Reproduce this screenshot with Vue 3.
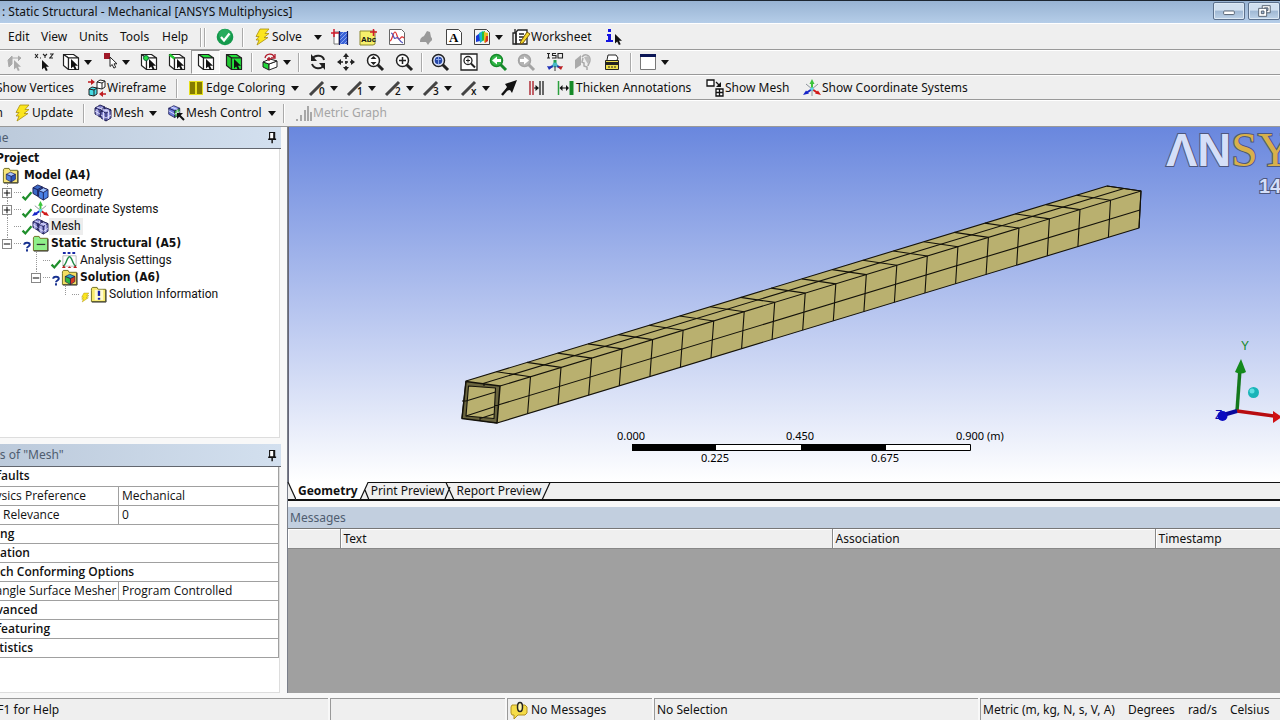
<script setup>
const cursor = (x, y, f = '#111', s = 'none') =>
  `<path transform="translate(${x} ${y})" d="M0 0v9.5l2.2-2 1.7 3.6 1.8-.9-1.7-3.4h3z" fill="${f}" stroke="${s}"/>`
const box = (top = '#fff', front = '#fff', side = '#fff') =>
  `<g stroke="#222" stroke-width="1.2" stroke-linejoin="round"><path d="M1.500 1.500h10l5 3.500h-10z" fill="${top}"/><path d="M1.500 1.500l5 3.500v11.500l-5-4z" fill="${side}"/><path d="M6.500 5h10v11.500h-10z" fill="${front}"/></g>`
const lens = (c = '#222', inner = '', fill = '#fff') =>
  `<path d="M11 11l6 6" stroke="${c}" stroke-width="3"/><circle cx="7.500" cy="7.500" r="6" fill="${fill}" stroke="${c}" stroke-width="1.500"/>${inner}`
const bolt = '<path d="M7 1h9l-4 4.500h4l-5 4h4L4 17l2-5H3l3-3.500H3z" fill="#fbe51c" stroke="#a98f10" stroke-width=".8"/>'
const axes = '<path d="M9 11V3" stroke="#3cc43c" stroke-width="2"/><path d="M6.500 5L9 0l2.500 5z" fill="#3cc43c"/><path d="M9 10l-5 3.500" stroke="#1624c8" stroke-width="2"/><path d="M0 16l3-4.500 3 3z" fill="#1624c8"/><path d="M9 10l5 3.500" stroke="#d01818" stroke-width="2"/><path d="M18 16l-3-4.500-3 3z" fill="#d01818"/><path d="M3 5l6 5M9 11v6M15 5l-6 5" stroke="#8a929a"/><circle cx="9" cy="10" r="1.800" fill="#5fd5e6"/>'
const solid = (a, b, c) =>
  `<g stroke="#181850" stroke-width=".9" stroke-linejoin="round"><path d="M2 5l6-3 7 3-6 3z" fill="${a}"/><path d="M2 5l7 3v8l-7-4z" fill="${b}"/><path d="M15 5l-6 3v8l6-4z" fill="${c}"/></g>`
const twin = (a, b, c, extra = '') =>
  `<g stroke="#15154a" stroke-width=".9" stroke-linejoin="round"><path d="M1 4l5-3 5 2v7l-5 3-5-3z" fill="${b}"/><path d="M1 4l5 2 5-3M6 6v7" fill="none"/><path d="M7 7l5-3 5 2v8l-5 3-5-3z" fill="${c}"/><path d="M7 7l5 2 5-3-5-2z" fill="${a}"/><path d="M12 9v8" fill="none"/></g>${extra}`
const folder = (f, inner = '') =>
  `<path d="M1.500 4.500V3l1-1.500h5l1 2h8v13h-15z" fill="${f}" stroke="#6d6d20"/><path d="M17 4v13H2" fill="none" stroke="#333"/>${inner}`
const edge = (n) =>
  `<path d="M2 16L15 3" stroke="#444" stroke-width="3"/><text x="11" y="16" font-family="Open Sans, sans-serif" font-size="10" font-weight="600" fill="#111">${n}</text>`
const meshLines = '<path d="M1 7l5 3M3 3l5 2M3 5v7M8 3v3M7 11l5 3 5-3M9.500 8v8M14.500 7v8M9 5.500l6 2" stroke="#e4e4ff" stroke-width=".9" fill="none"/>'

const icons = {
  ok: '<circle cx="9" cy="9" r="8.300" fill="#14994c"/><circle cx="9" cy="7" r="6" fill="#35b86b" opacity=".6"/><path d="M5 9l3 3.500 5.500-7" fill="none" stroke="#fff" stroke-width="2.200"/>',
  bolt,
  section: '<path d="M3 4h5v12H3z" fill="#fff" stroke="#777"/><path d="M8 4h9v12H8z" fill="#3a62d8"/><path d="M9 8l4-4M9 12l8-8M9 16l8-8M13 16l4-4" stroke="#9db8f4" stroke-width=".8"/><path d="M8.500 3v14M16.500 3v14" stroke="#111b60" stroke-width="1.200"/><path d="M0 5h8M3 1v8" stroke="#d01c2c" stroke-width="1.500"/>',
  note: '<path d="M1 3h15v13l-2 1H1z" fill="#f7f06a" stroke="#8c8830"/><text x="2" y="14" font-family="Liberation Sans, sans-serif" font-size="8" font-weight="700" fill="#111">Abc</text><path d="M11 4h7M14.500 1v7" stroke="#d01c2c" stroke-width="1.500"/>',
  chart: '<path d="M1.500 1.500h12l3 3v12h-15z" fill="#fff" stroke="#666"/><path d="M2 13c2 0 3-9 5-9s2 7 4 7 2-4 5-1" fill="none" stroke="#d33" stroke-width="1.200"/><path d="M3 5c3 0 2 7 5 5s3 4 7 5" fill="none" stroke="#55b" stroke-width="1.200"/>',
  comment: '<path d="M3 14c0-4 2-5 4-6l3-5 3 1 1 5c2 2 1 4-1 5l-2 3-2-3z" fill="#9a9a9a"/>',
  image: '<path d="M1.500 1.500h12l3 3v12h-15z" fill="#fff" stroke="#444"/><text x="4" y="14" font-family="Liberation Serif, serif" font-weight="700" font-size="13">A</text>',
  picture: '<path d="M1.500 1.500h12l3 3v12h-15z" fill="#f4f4f4" stroke="#444"/><path d="M3 8l4-3v8l-4 1z" fill="#1838d8"/><path d="M6 5l4-2 1 9-4 3z" fill="#18b8d0"/><path d="M9 4l3-1v9l-3 1z" fill="#29c038"/><path d="M11 4l4 1v7l-4 3z" fill="#e8c020"/><path d="M13 8h2v5l-3 2z" fill="#d83020"/>',
  sheet: '<path d="M4 4l2-2h9v14H4z" fill="#fff" stroke="#222" stroke-width="1.300"/><path d="M1 5h3v11H1zM3 1v4M7 6h5M7 9h5M7 12h3" fill="none" stroke="#222" stroke-width="1.300"/><path d="M15 4l3 2-7 9-3 1 1-3z" fill="#f6d928" stroke="#7a5a10"/>',
  info: '<path d="M3 1h3v3H3zM2 6h4v6h2v2H1v-2h2V8H2z" fill="#1414e0"/>' + cursor(10, 6),
  probe: '<path d="M2 7l4-4v8l-3 3zM6 5h8M12 3l3 2-3 3" fill="#aaa" stroke="#aaa"/>' + cursor(8, 7, '#aaa'),
  xyz: '<path d="M0 1l3 4M3 1L0 5M5 5h1M8 1l2 2 2-2M10 3v2M14 5h1M15 1h3l-3 4h3" stroke="#222" stroke-width="1.100" fill="none"/>' + cursor(7, 7),
  boxSel: box() + cursor(9, 6),
  pick: '<path d="M0 0h6v6H0z" fill="#a01828"/>' + cursor(6, 4, '#fff', '#222'),
  vertexSel: box() + '<circle cx="6" cy="5" r="2.500" fill="#28e040" stroke="#164"/>' + cursor(9, 6),
  edgeSel: box() + '<path d="M1.500 1.500l5 4" stroke="#20c830" stroke-width="2.500"/>' + cursor(9, 6),
  faceSel: box('#22e33a') + cursor(9, 6),
  bodySel: box('#22e33a', '#22e33a', '#22c832') + cursor(9, 6),
  view: '<path d="M2 9l6 2v6l-6-3z" fill="#22d838" stroke="#222"/><path d="M8 11l8-3v6l-8 3z" fill="#fff" stroke="#222"/><path d="M2 9l7-3 7 2-8 3z" fill="#fff" stroke="#222"/><path d="M4 5c1-5 8-5 9-1M14 1v4h-4M8 4v4M6 6h4" fill="none" stroke="#b01828" stroke-width="1.300"/>',
  rotate: '<path d="M3 6c3-5 11-4 12 1M15 12c-3 5-10 4-12-1" fill="none" stroke="#222" stroke-width="2"/><path d="M2 1v7h6zM16 17v-7h-6z" fill="#222"/>',
  pan: '<path d="M9 3v12M3 9h12" stroke="#222" stroke-width="1.500" stroke-dasharray="3 2"/><path d="M9 0l3 4H6zM9 18l3-4H6zM0 9l4-3v6zM18 9l-4-3v6z" fill="#222"/>',
  zoomDrag: lens('#222', '<path d="M7.500 3l3 3h-6zM7.500 12l3-3h-6z" fill="#222"/>'),
  zoomIn: lens('#222', '<path d="M7.500 4v7M4 7.500h7" stroke="#222" stroke-width="1.500"/>'),
  zoomFit: lens('#222', '<circle cx="7.500" cy="7.500" r="3.800" fill="#2748a8"/><path d="M5 6.500h5M7.500 4v7" stroke="#89a5e8"/>', '#dfe8ff'),
  zoomBox: '<path d="M1 1h16v16H1z" fill="#fff" stroke="#222" stroke-width="1.300"/><circle cx="8" cy="7.500" r="4" fill="#fff" stroke="#222" stroke-width="1.300"/><path d="M11 10.500l4 4" stroke="#222" stroke-width="2"/><path d="M6 7.500h4M8 5.500v4" stroke="#222"/>',
  zoomPrev: lens('#16892a', '<path d="M3 7.500l5-4v2.500h4v3H8v2.500z" fill="#fff"/>', '#2fb545'),
  zoomNext: lens('#a4a4a4', '<path d="M12 7.500l-5-4v2.500H3v3h4v2.500z" fill="#fff"/>', '#b4b4b4'),
  iso: '<path d="M1 .500h3M1 5h3M2.500 0v5M10 .500H6.500v2H10V5H6M12 .500h4.500V5H12z" fill="none" stroke="#222" stroke-width="1.100"/><path d="M9 12V7" stroke="#22a050" stroke-width="3"/><path d="M9 12l-6 3M9 12l6 3" stroke="#2438a8" stroke-width="2"/><path d="M1 13l2 4 3-3z" fill="#2030b8"/><path d="M17 13l-2 4-3-3z" fill="#c02020"/><circle cx="9" cy="12" r="2.500" fill="#48b8c8"/><path d="M9 13v5" stroke="#333"/>',
  look: '<path d="M1 7l6-5v10l-6 4z" fill="#aaa"/><path d="M8 4c3-4 8-2 8 3 0 3-2 4-2 6M9 5l-1 4 2 1v3l3 1v3" fill="none" stroke="#aaa" stroke-width="1.500"/><path d="M10 4l5-1 1 4-2 4-2-3z" fill="#bbb"/>',
  print: '<path d="M4 7l1-5h8l2 3-1 2" fill="#fff" stroke="#222"/><path d="M2.500 7.500h13v9h-13z" fill="#eee04c" stroke="#222"/><path d="M2 9h14v3H2z" fill="#222"/><path d="M6 13v2M9 13v2M12 13v2" stroke="#222"/>',
  pane: '<path d="M1.500 1.500h15v15h-15z" fill="#fff" stroke="#777"/><path d="M1 1h16v3H1z" fill="#0b1656"/>',
  wire: '<path d="M9 3l3-2 5 1v6l-3 2-5-1z" fill="#fff" stroke="#222"/><path d="M9 3l5 1v6M14 4l3-2" fill="none" stroke="#222"/><path d="M1 10l3-2 5 1v6l-3 2-5-1z" fill="#46dbe4" stroke="#222"/><path d="M1 10l5 1v6M6 11l3-2" fill="none" stroke="#222"/><path d="M0 3h4M14 15h4" stroke="#c01c20" stroke-width="1.500"/><path d="M3 0l4 3-4 3zM15 12l-4 3 4 3z" fill="#c01c20"/>',
  color: '<path d="M2 2h14v14H2z" fill="#e6e01c"/><path d="M3 3h5v12H3zM10 3h5v12h-5z" fill="#857c00"/>',
  e0: edge(0), e1: edge(1), e2: edge(2), e3: edge(3), ex: edge('x'),
  dart: '<path d="M2 16l6-7" stroke="#111" stroke-width="2.500"/><path d="M17 1l-5 13-2-3-5 1 2-4-2-3z" fill="#111"/>',
  thickness: '<path d="M3 2v14M6 2v14" stroke="#b0303a" stroke-width="1.500"/><path d="M13 2v14M16 2v14" stroke="#666" stroke-width="2"/><path d="M7 9h3" stroke="#111"/><path d="M8.500 6l3.500 3-3.500 3z" fill="#111"/>',
  thicken: '<path d="M1.500 2v14" stroke="#2ba03c" stroke-width="1.500"/><path d="M14.500 2v14" stroke="#168a28" stroke-width="4"/><path d="M4 9h7" stroke="#111"/><path d="M2.500 9l3-3v6zM12 9L9 6v6z" fill="#111"/>',
  mesh: '<path d="M1 1h7v6H1zM10 10h7v7h-7zM13.500 10v7M10 13.500h7" fill="#fff" stroke="#111" stroke-width="1.300"/><path d="M10 3l4 4" stroke="#111" stroke-width="1.300"/><path d="M15 3v5h-5z" fill="#111"/>',
  axes,
  meshCube: twin('#a9a9e8', '#7c7cc8', '#8585d0', meshLines),
  control: '<g transform="scale(.85)">' + solid('#8d9cf0', '#6a78d8', '#37b83f') + '<path d="M2 8l7 4 6-3M5 3.500l7 3v7" stroke="#e8e8ff" fill="none"/></g><path d="M11 10l6 6" stroke="#111" stroke-width="2"/><path d="M10 9h6l-6 6z" fill="#111"/>',
  graph: '<path d="M3 17v-2M7 17v-6M11 17V6M14 17V2M17 17V8" stroke="#a8a8a8" stroke-width="2"/>',
  model: folder('#f7e57a', '<g transform="translate(3 4) scale(.75)">' + solid('#a9c5ff', '#4f7fe0', '#2c55b8') + '</g>'),
  geom: twin('#9cc0ff', '#3c6ac8', '#4a80e4'),
  env: folder('#8ff08a', '<path d="M5 10h9" stroke="#333" stroke-width="1.300"/>'),
  settings: '<path d="M2 1h3M7 1h3M12 1h3" stroke="#1828a8" stroke-width="2"/><path d="M2 4h14v11H2z" fill="#fff" stroke="#bbb"/><path d="M2 15C6 14 6 5 9 5s3 9 7 10" fill="none" stroke="#1f8a45" stroke-width="1.500"/><path d="M1 17l2-3 2 3zM13 17l2-3 2 3zM7 17l2-2 2 2z" fill="#b82020"/>',
  solution: folder('#f2df62', '<g transform="translate(3 4) scale(.78)">' + solid('#2aa8c8', '#2cb840', '#d83a20') + '</g>'),
  infoFolder: folder('#f8ea6c', '<path d="M5 4h9v11H5z" fill="#fffbd0"/><path d="M9.500 5v5.500" stroke="#1420a8" stroke-width="2.500"/><path d="M8.300 12.500h2.500v2H8.300z" fill="#1420a8"/>'),
  bubble: '<path d="M2 4h13l2 2v6l-2 2H8l-4 4v-4H2l-1-2V6z" fill="#f5dc48" stroke="#b09020"/><ellipse cx="10" cy="6" rx="2.500" ry="4.500" fill="#fff6b0" stroke="#222" stroke-width="1.500"/>',
  pin: '<path d="M5 2h7v9H5z" fill="#fff" stroke="#111" stroke-width="1.500"/><path d="M11 2v9M3 11.500h11M8.500 12v5" stroke="#111" stroke-width="2"/>',
  check: '<path d="M1 11l5 5L17 3" fill="none" stroke="#1f8f2c" stroke-width="4"/>',
  query: '<path d="M4 6c0-5 10-5 10 0 0 3-5 3-5 6M9 14v4" fill="none" stroke="#16308f" stroke-width="3.500"/>'
}

const i = (icon, label) => ({ icon, label })
const l = (text, icon, extra) => ({ text, icon, extra })
const d = (label) => ({ drop: label })
const s = { sep: true }
const g = { gap: true }
const bars = [
  { name: 'menu', items: [l('Edit'), l('View'), l('Units'), l('Tools'), l('Help'), s, s, i('ok', 'Status'), s, g, l('Solve', 'bolt'), d('Solve options'), i('section', 'New section plane'), i('note', 'Annotation'), i('chart', 'Chart'), i('comment', 'Comment'), i('image', 'Figure'), i('picture', 'Image'), d('Image options'), l('Worksheet', 'sheet'), i('info', 'Selection information')] },
  { name: 'select', items: [i('probe', 'Direction'), i('xyz', 'Coordinates'), i('boxSel', 'Select type'), d('Select types'), i('pick', 'Select mode'), d('Select modes'), i('vertexSel', 'Vertex'), i('edgeSel', 'Edge'), { icon: 'faceSel', label: 'Face', on: true }, i('bodySel', 'Body'), s, i('view', 'View'), d('Views'), s, i('rotate', 'Rotate'), i('pan', 'Pan'), i('zoomDrag', 'Zoom'), i('zoomIn', 'Box zoom'), s, i('zoomFit', 'Zoom to fit'), i('zoomBox', 'Magnifier'), i('zoomPrev', 'Previous view'), i('zoomNext', 'Next view'), i('iso', 'Isometric'), i('look', 'Look at'), i('print', 'Manage views'), s, i('pane', 'Viewports'), d('Viewport layout')] },
  { name: 'display', items: [l('Show Vertices', null, 'cut'), g, l('Wireframe', 'wire'), s, g, l('Edge Coloring', 'color'), d('Edge coloring options'), i('e0', 'Edge 0'), d('Edge 0 options'), i('e1', 'Edge 1'), d('Edge 1 options'), i('e2', 'Edge 2'), d('Edge 2 options'), i('e3', 'Edge 3'), d('Edge 3 options'), i('ex', 'Edge x'), d('Edge x options'), i('dart', 'Edge direction'), i('thickness', 'Thickness'), g, l('Thicken Annotations', 'thicken'), l('Show Mesh', 'mesh'), l('Show Coordinate Systems', 'axes')] },
  { name: 'context', items: [l('Mesh', null, 'cut'), g, l('Update', 'bolt'), s, g, l('Mesh', 'meshCube'), d('Mesh options'), l('Mesh Control', 'control'), d('Mesh controls'), s, g, l('Metric Graph', 'graph', 'off')] }
]

const tree = [
  { lv: 1, box: '+', st: 'check', icon: 'geom', text: 'Geometry' },
  { lv: 1, box: '+', st: 'check', icon: 'axes', text: 'Coordinate Systems' },
  { lv: 1, st: 'check', icon: 'meshCube', text: 'Mesh', sel: true },
  { lv: 1, box: '−', st: 'query', icon: 'env', text: 'Static Structural (A5)', bold: true, last: true },
  { lv: 2, st: 'check', icon: 'settings', text: 'Analysis Settings' },
  { lv: 2, box: '−', st: 'query', icon: 'solution', text: 'Solution (A6)', bold: true, last: true },
  { lv: 3, st: 'bolt', icon: 'infoFolder', text: 'Solution Information', last: true }
]

const details = [
  { group: 'Defaults' },
  { key: 'Physics Preference', value: 'Mechanical' },
  { key: 'Relevance', value: '0', param: true },
  { group: 'Sizing' },
  { group: 'Inflation' },
  { group: 'Patch Conforming Options' },
  { key: 'Triangle Surface Mesher', value: 'Program Controlled' },
  { group: 'Advanced' },
  { group: 'Defeaturing' },
  { group: 'Statistics' }
]

// Beam mesh: 21 divisions along its length
const N = 21
const at = (a, b, k) => [a[0] + ((b[0] - a[0]) * k) / N, a[1] + ((b[1] - a[1]) * k) / N]
const near = { back: [466, 381], top: [500, 386], bottom: [497, 423] }
const far = { back: [1107, 186], top: [1141, 191], bottom: [1139, 228] }
const cuts = Array.from({ length: N }, (_, k) =>
  ['back', 'top', 'bottom'].map((p) => at(near[p], far[p], k + 1).map((v) => v.toFixed(1)).join(',')).join(' ')
)
</script>

<template>
  <div class="app">
    <header class="title">
      <h1>: Static Structural - Mechanical [ANSYS Multiphysics]</h1>
      <div class="winbtns">
        <button aria-label="Minimize"><svg viewBox="0 0 18 18"><rect x="3" y="9" width="12" height="4" rx="1" fill="#fff" stroke="#4c5868" /></svg></button>
        <button aria-label="Restore"><svg viewBox="0 0 18 18"><path d="M7 3h9v8H7z" fill="#fff" stroke="#4c5868" /><path d="M9.500 5.500h4v3h-4z" fill="#9fb6d3" stroke="#4c5868" /><path d="M3 6h9v9H3z" fill="#fff" stroke="#4c5868" /><path d="M6 9h3v3H6z" fill="#9fb6d3" stroke="#4c5868" /></svg></button>
      </div>
    </header>

    <nav v-for="b in bars" :key="b.name" class="bar" :class="b.name" :aria-label="b.name">
      <template v-for="(it, n) in b.items" :key="n">
        <span v-if="it.sep" class="sep"></span>
        <span v-else-if="it.gap"></span>
        <button v-else-if="it.drop" class="drop" :aria-label="it.drop"><svg viewBox="0 0 9 5"><path d="M0 0h8L4 5z" fill="#111" /></svg></button>
        <button v-else-if="it.text" class="lab" :class="it.extra"><svg v-if="it.icon" viewBox="0 0 18 18" v-html="icons[it.icon]"></svg>{{ it.text }}</button>
        <button v-else class="ico" :class="{ on: it.on }" :aria-label="it.label"><svg viewBox="0 0 18 18" v-html="icons[it.icon]"></svg></button>
      </template>
    </nav>

    <main>
      <aside>
        <section class="outline">
          <h2><span>Outline</span><button aria-label="Pin outline"><svg viewBox="0 0 18 18" v-html="icons.pin"></svg></button></h2>
          <ul class="tree">
            <li class="root"><b>Project</b></li>
            <li class="model"><svg viewBox="0 0 18 18" v-html="icons.model"></svg><b>Model (A4)</b></li>
            <li v-for="t in tree" :key="t.text" :class="['lv' + t.lv, { last: t.last }]">
              <span class="node"><button v-if="t.box" :aria-label="'Toggle ' + t.text"><svg viewBox="0 0 10 10"><path :d="t.box === '+' ? 'M1 5h8M5 1v8' : 'M1 5h8'" stroke="#111" stroke-width="1.300" /></svg></button></span>
              <span class="dots"></span>
              <svg class="st" viewBox="0 0 18 18" v-html="icons[t.st]"></svg>
              <svg viewBox="0 0 18 18" v-html="icons[t.icon]"></svg>
              <span class="name" :class="{ bold: t.bold, sel: t.sel }">{{ t.text }}</span>
            </li>
          </ul>
        </section>
        <section class="details">
          <h2><span>Details of "Mesh"</span><button aria-label="Pin details"><svg viewBox="0 0 18 18" v-html="icons.pin"></svg></button></h2>
          <div class="sheet">
            <table>
              <colgroup><col class="keys"><col></colgroup>
              <tbody>
                <tr v-for="r in details" :key="r.group || r.key">
                  <th v-if="r.group" colspan="2">{{ r.group }}</th>
                  <template v-else>
                    <td :class="{ param: r.param }">{{ r.key }}</td>
                    <td>{{ r.value }}</td>
                  </template>
                </tr>
              </tbody>
            </table>
          </div>
        </section>
      </aside>

      <div class="work">
        <div class="view">
          <svg class="scene" viewBox="289 127 991 355" preserveAspectRatio="xMaxYMid slice">
            <g fill="#b9b06f" stroke="#14120a" stroke-width="1.100" stroke-linejoin="round">
              <path d="M466 381L1107 186L1141 191L1139 228L497 423L462 418z" />
              <path d="M500 386L1141 191M483 383.500L1124 188.500M498 405L1140 210" fill="none" />
              <polyline v-for="c in cuts" :key="c" :points="c" fill="none" />
              <path d="M466 381.500L500 386L497 423L462 418.500z" fill="#6a653f" stroke-width="1.500" />
              <path d="M468.500 386L495.500 388L494 418.500L466 416z" />
              <path d="M466 401L495.500 392M466 416L495 406.500M480 418.500L494 414M462 401h4M484 383v3M495 405.500h4M480 417v4" fill="none" />
            </g>
            <path d="M632.500 444.500h338v6h-338z" fill="#fff" stroke="#000" />
            <path d="M632 444h84v7h-84zM801 444h85v7h-85z" />
            <g class="scale">
              <text x="617" y="440">0.000</text><text x="786" y="440">0.450</text><text x="956" y="440">0.900 (m)</text>
              <text x="701" y="462">0.225</text><text x="871" y="462">0.675</text>
            </g>
            <path d="M1237 411l3-42" stroke="#14781c" stroke-width="3.500" />
            <path d="M1241 359l5 13q-5 3-11 0z" fill="#148a1c" />
            <path d="M1237 411l37 5" stroke="#b80c10" stroke-width="3.500" />
            <path d="M1273 411l9 6-9 6z" fill="#d01014" />
            <path d="M1237 411l-14 4" stroke="#08089c" stroke-width="4" />
            <text x="1215" y="419" class="ax z">Z</text>
            <circle cx="1222.500" cy="416" r="5" fill="#0a0ac0" />
            <circle cx="1253.500" cy="392.500" r="5.500" fill="#19b4b8" /><circle cx="1252" cy="391" r="2.500" fill="#5fe0e2" />
            <text x="1241" y="350" class="ax y">Y</text>
            <text x="1166" y="166" class="logo an">ΛN</text>
            <text x="1231" y="166" class="logo sys">SYS</text>
            <text x="1259" y="193" class="logo ver">14.0</text>
          </svg>
        </div>
        <div class="tabs">
          <svg viewBox="0 0 8 18" class="s8"><path d="M0 0h8v18z" fill="#fff" stroke="none" /><path d="M0 0l8 17.500" /></svg>
          <button class="cur">Geometry</button>
          <svg viewBox="0 0 12 18" class="s12"><path d="M0 0h10L1 17H0z" fill="#fff" stroke="none" /><path d="M1 18L9 .500h3M6 8l4 10" /></svg>
          <button>Print Preview</button>
          <svg viewBox="0 0 12 18" class="s12"><path d="M0 .500h12M1 17L6 5M2 .500L10 18" /></svg>
          <button>Report Preview</button>
          <svg viewBox="0 0 12 18" class="s12"><path d="M0 .500h12M1 18L9 .500" /></svg>
          <span class="rest"></span>
        </div>
        <section class="messages">
          <h2><span>Messages</span></h2>
          <table>
            <thead>
              <tr><th class="a"></th><th class="b">Text</th><th class="c">Association</th><th>Timestamp</th></tr>
            </thead>
          </table>
        </section>
      </div>
    </main>

    <footer>
      <span class="help"><span>Press F1 for Help</span></span>
      <span class="p2"></span>
      <span class="p3"><svg viewBox="0 0 18 18" v-html="icons.bubble"></svg>No Messages</span>
      <span class="p4">No Selection</span>
      <span class="p5"><span>Metric (m, kg, N, s, V, A)</span><span>Degrees</span><span>rad/s</span><span>Celsius</span></span>
    </footer>
  </div>
</template>

<style>
body { margin: 0; overflow: hidden; }
</style>

<style scoped>
* { box-sizing: border-box; }
.app { display: flex; flex-direction: column; height: 100vh; overflow: hidden; background: #f8f8f8; color: #111; font: 12px/16px "Noto Sans", "Open Sans", sans-serif; }
button { border: 0; padding: 0; margin: 0; background: none; font: inherit; color: inherit; }
svg { display: block; flex: none; width: 18px; height: 18px; overflow: visible; }
h1, h2 { margin: 0; font: inherit; }
.title { display: flex; flex: none; justify-content: space-between; height: 23px; border-top: 1px solid #1c2530; background: linear-gradient(#98b3d3, #b5cde8); overflow: hidden; }
.title h1 { padding-left: 2px; line-height: 22px; white-space: nowrap; }
.winbtns { display: flex; gap: 3px; padding-top: 1px; }
.winbtns button { display: flex; align-items: center; justify-content: center; width: 32px; height: 18px; border: 1px solid #5b708c; border-radius: 2px; background: linear-gradient(#d0dfef 45%, #9fb8d4 50%, #bdd2e8); box-shadow: inset 0 0 0 1px #dce9f5; }
.winbtns svg { width: 16px; height: 16px; }
.bar { display: grid; flex: none; height: 25px; background: #efefef; border-bottom: 1px solid #999; box-shadow: inset 0 1px #fff; align-items: stretch; white-space: nowrap; }
.menu { height: 27px; padding-top: 2px; padding-left: 8px; grid-template-columns: 33px 38px 41px 42px 37px 3px 6px 33px 3px 9px 61px 12px 28px 28px 29px 29px 28px 27px 17px 89px 26px; }
.select { grid-template-columns: 29px 29px 26px 19px 19px 12px 29px 28px 29px 28px 8px 27px 11px 9px 29px 28px 29px 29px 8px 28px 29px 29px 28px 29px 28px 29px 9px 26px 12px; }
.display { padding-top: 2px; grid-template-columns: 74px 14px 86px 6px 7px 104px 12px 27px 11px 27px 11px 27px 11px 27px 11px 27px 13px 27px 27px 8px 149px 97px 180px; }
.context { height: 27px; grid-template-columns: 3px 10px 68px 6px 7px 55px 18px 101px 13px 6px 7px 110px; }
.bar button { display: flex; align-items: center; }
.lab { gap: 1px; }
.lab.cut { justify-content: flex-end; }
.lab.off { color: #a5a5a5; }
.ico { justify-content: center; }
.ico.on { background: #f8f8f8; border: 1px solid #999; border-right-color: #fff; border-bottom-color: #fff; }
.drop svg { width: 9px; height: 5px; }
.sep { justify-self: center; align-self: center; width: 2px; height: 19px; border-left: 1px solid #aaa; background: #fff; }
main { display: grid; flex: 1; min-height: 0; grid-template-columns: 281px minmax(0, 1fr); column-gap: 6px; padding-bottom: 5px; }
aside { display: grid; grid-template-rows: 311px minmax(0, 1fr); row-gap: 6px; min-height: 0; overflow: hidden; }
section { display: flex; flex-direction: column; min-height: 0; }
h2 { display: flex; flex: none; align-items: center; height: 22px; background: linear-gradient(90deg, #bccadb, #d3e0ef); color: #4f5d70; white-space: nowrap; }
aside h2 { justify-content: space-between; border-bottom: 1px solid #62666e; padding-right: 2px; }
h2 svg { width: 13px; height: 13px; }
aside h2 span { margin-left: -33px; }
.tree { flex: 1; margin: 0 1px 0 0; padding: 1px 0 0; list-style: none; background: #fff; border: 1px solid #ddd; border-width: 0 1px 1px 0; font: 12px/17px Roboto, "Noto Sans", sans-serif; }
.tree li { display: flex; align-items: center; height: 17px; white-space: nowrap; }
.tree svg { width: 17px; height: 17px; }
.root { margin-left: -4px; }
.model { gap: 5px; padding-left: 2px; }
.lv2 { padding-left: 29px; }
.lv3 { padding-left: 58px; }
.node { display: flex; align-items: center; align-self: stretch; width: 14px; padding-left: 2px; background: repeating-linear-gradient(#999 0 1px, transparent 1px 2px) 7px 0 / 1px 100% no-repeat; }
.last .node { background-size: 1px 9px; }
.node button { width: 10px; height: 10px; background: #fff; border: 1px solid #888; }
.node button svg { width: 8px; height: 8px; }
.dots { width: 8px; height: 1px; background: repeating-linear-gradient(90deg, #999 0 1px, transparent 1px 2px); }
.tree .st { align-self: flex-end; width: 10px; height: 11px; }
.name { padding: 0 2px; }
.bold, .tree b { font-family: "DejaVu Sans Condensed", "Noto Sans", sans-serif; font-weight: 700; }
.sel { background: #ededed; }
.details h2 { height: 23px; }
.sheet { flex: 1; background: #fff; margin-right: 1px; border: 1px solid #ddd; border-width: 0 1px 1px 0; }
.sheet table { width: 299px; margin-left: -20px; border-collapse: collapse; table-layout: fixed; font-family: "Open Sans", sans-serif; }
.sheet td, .sheet th { height: 19px; padding: 0 0 0 3px; line-height: 18px; text-align: left; border: 1px solid #a0a0a0; border-top: 0; white-space: nowrap; }
.sheet th { padding-left: 0; font-weight: 600; }
.keys { width: 138px; }
.sheet td:first-child { padding-left: 0; }
.sheet td.param:first-child { padding-left: 22px; }
.work { display: flex; flex-direction: column; min-width: 0; min-height: 0; border-left: 1px solid #7a7f8a; }
.view { flex: 1; min-height: 0; background: linear-gradient(#6987de, #fff); border-left: 1px solid #667; overflow: hidden; }
.scene { width: 100%; height: 100%; }
.scale { font-size: 11px; }
.ax { font: 12px "Liberation Sans", sans-serif; }
.ax.y { fill: #168a28; }
.ax.z { fill: #0a0ab0; }
.logo { paint-order: stroke; stroke: #4d577e; stroke-width: 2px; fill: #d5dff8; font-weight: 700; }
.an { font-size: 47px; font-family: "Liberation Sans", sans-serif; }
.sys { font-size: 48px; font-family: "Liberation Serif", serif; font-weight: 400; fill: #d8b04a; }
.ver { font-size: 20px; font-family: "Liberation Sans", sans-serif; }
.tabs { display: flex; flex: none; height: 19px; background: #efefef; border-bottom: 2px solid #111; }
.tabs svg { height: 18px; fill: none; stroke: #111; stroke-width: 1.2; }
.s8 { width: 8px; }
.s12 { width: 12px; }
.tabs button { line-height: 16px; border-top: 1px solid #111; white-space: nowrap; }
.tabs .cur { font-weight: 700; background: #fff; border-top-color: #fff; padding: 0 1px 0 2px; }
.rest { flex: 1; border-top: 1px solid #111; }
.messages { flex: none; height: 186px; margin-top: 6px; background: #a0a0a0; }
.messages h2 { height: 22px; padding-left: 2px; border-bottom: 1px solid #777; background: #c2cfdf; }
.messages table { width: 100%; border-collapse: collapse; table-layout: fixed; background: #efefef; }
.messages th { height: 19px; padding: 0 0 0 3px; font-weight: 400; text-align: left; border-right: 1px solid #888; border-bottom: 1px solid #888; line-height: 17px; box-shadow: inset 1px 1px #fff; }
.messages th:last-child { border-right: 0; }
.a { width: 52px; }
.b { width: 492px; }
.c { width: 323px; }
footer { display: grid; flex: none; grid-template-columns: 328px 175px 145px 324px minmax(0, 1fr); column-gap: 2px; height: 22px; background: #f8f8f8; white-space: nowrap; overflow: hidden; }
footer > span { display: flex; align-items: center; padding-left: 2px; background: #efefef; border-top: 1px solid #999; border-left: 1px solid #999; overflow: hidden; }
footer .help { border-left: 0; padding: 0; }
.help span { margin-left: -36px; }
.p3 svg { margin-right: 3px; }
footer .p5 { gap: 13px; }
</style>
